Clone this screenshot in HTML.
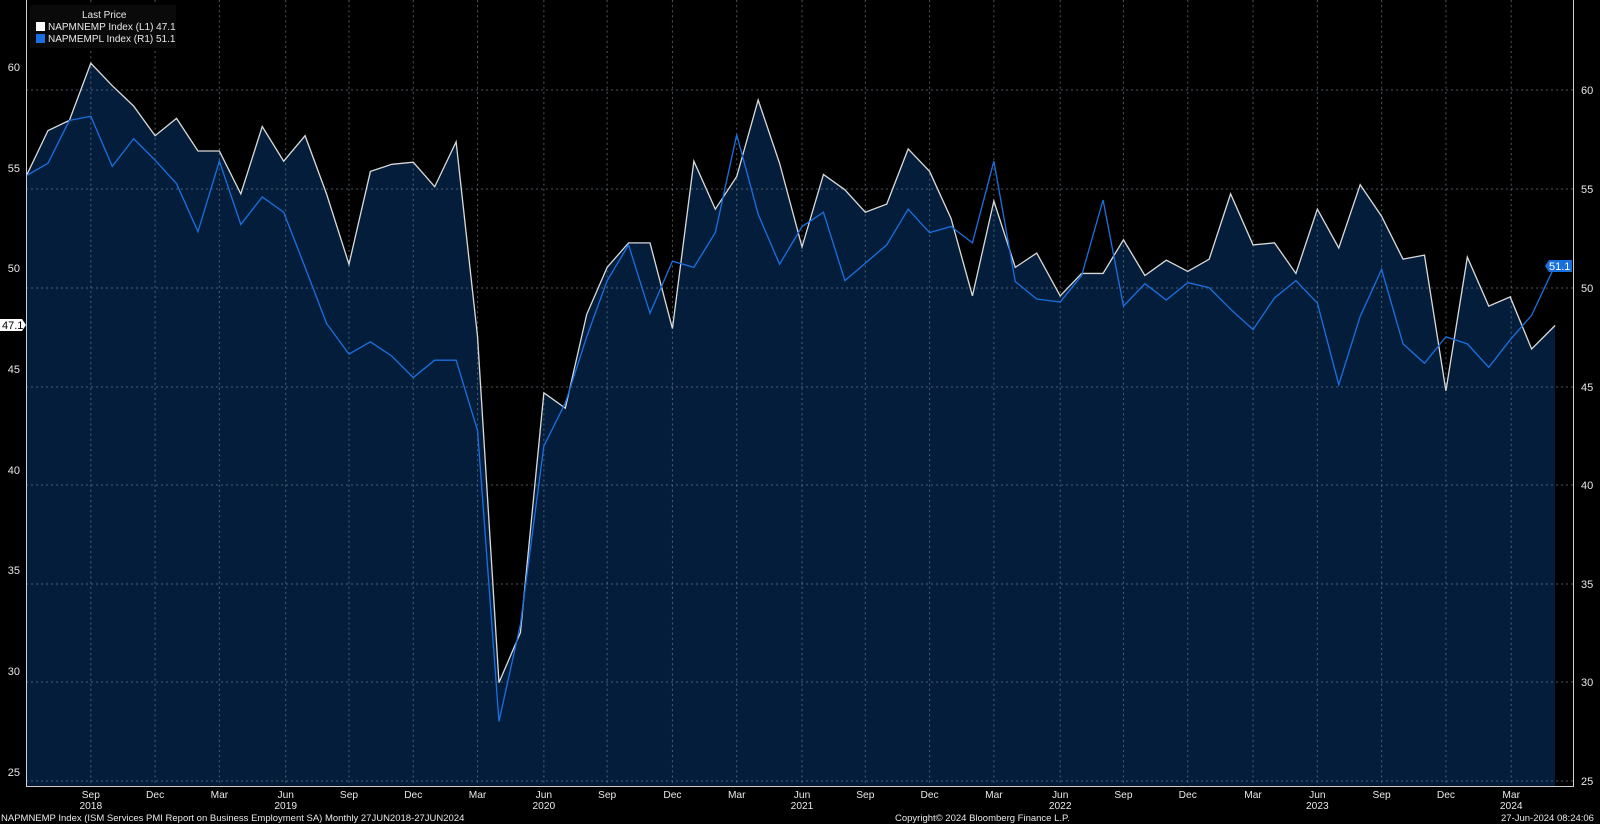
<!DOCTYPE html>
<html><head><meta charset="utf-8"><style>
html,body{margin:0;padding:0;background:#000;width:1600px;height:824px;overflow:hidden}
svg text{font-family:"Liberation Sans",sans-serif;fill:#e8e8e8}
</style></head><body>
<svg width="1600" height="824" viewBox="0 0 1600 824" xmlns="http://www.w3.org/2000/svg">
<rect width="1600" height="824" fill="#000"/>
<g transform="scale(1.0204,1.0204)">
<polygon fill="#031d3a" points="26,770 26,172 47,128 68,118 89,62 110,84 131,104 152,133 173,116 194,148 215,148 236,190 257,124 278,158 299,133 320,190 342,259 363,168 384,161 405,159 426,183 447,139 468,330 489,669 510,620 533,385 554,400 575,308 595,262 616,238 637,238 659,322 680,158 701,205 722,173 743,98 764,160 786,242 807,171 828,186 848,208 869,200 890,146 911,168 932,214 953,290 974,197 995,262 1016,248 1039,290 1060,268 1081,268 1101,235 1122,270 1143,255 1164,266 1185,254 1206,190 1228,240 1249,238 1270,268 1291,205 1312,243 1333,181 1354,212 1375,254 1396,250 1417,383 1438,252 1459,300 1480,291 1501,342 1524,319 1524,770"/>
<g stroke="#6a7a8a" stroke-width="1" stroke-dasharray="2,3" opacity="0.7">
<line x1="89" y1="0" x2="89" y2="770"/><line x1="152" y1="0" x2="152" y2="770"/><line x1="215" y1="0" x2="215" y2="770"/><line x1="280" y1="0" x2="280" y2="770"/><line x1="342" y1="0" x2="342" y2="770"/><line x1="405" y1="0" x2="405" y2="770"/><line x1="468" y1="0" x2="468" y2="770"/><line x1="533" y1="0" x2="533" y2="770"/><line x1="595" y1="0" x2="595" y2="770"/><line x1="659" y1="0" x2="659" y2="770"/><line x1="722" y1="0" x2="722" y2="770"/><line x1="786" y1="0" x2="786" y2="770"/><line x1="848" y1="0" x2="848" y2="770"/><line x1="911" y1="0" x2="911" y2="770"/><line x1="974" y1="0" x2="974" y2="770"/><line x1="1039" y1="0" x2="1039" y2="770"/><line x1="1101" y1="0" x2="1101" y2="770"/><line x1="1164" y1="0" x2="1164" y2="770"/><line x1="1228" y1="0" x2="1228" y2="770"/><line x1="1291" y1="0" x2="1291" y2="770"/><line x1="1354" y1="0" x2="1354" y2="770"/><line x1="1417" y1="0" x2="1417" y2="770"/><line x1="1481" y1="0" x2="1481" y2="770"/>
</g>
</g>
<g stroke="#6a7a8a" stroke-width="1" stroke-dasharray="2,3" opacity="0.7">
<line x1="26" y1="781" x2="1574" y2="781"/><line x1="26" y1="682" x2="1574" y2="682"/><line x1="26" y1="584" x2="1574" y2="584"/><line x1="26" y1="485" x2="1574" y2="485"/><line x1="26" y1="387" x2="1574" y2="387"/><line x1="26" y1="288" x2="1574" y2="288"/><line x1="26" y1="189" x2="1574" y2="189"/><line x1="26" y1="90" x2="1574" y2="90"/>
</g>
<g transform="scale(1.0204,1.0204)">
<polyline fill="none" stroke="#d8d8d8" stroke-width="1.3" points="26,172 47,128 68,118 89,62 110,84 131,104 152,133 173,116 194,148 215,148 236,190 257,124 278,158 299,133 320,190 342,259 363,168 384,161 405,159 426,183 447,139 468,330 489,669 510,620 533,385 554,400 575,308 595,262 616,238 637,238 659,322 680,158 701,205 722,173 743,98 764,160 786,242 807,171 828,186 848,208 869,200 890,146 911,168 932,214 953,290 974,197 995,262 1016,248 1039,290 1060,268 1081,268 1101,235 1122,270 1143,255 1164,266 1185,254 1206,190 1228,240 1249,238 1270,268 1291,205 1312,243 1333,181 1354,212 1375,254 1396,250 1417,383 1438,252 1459,300 1480,291 1501,342 1524,319"/>
<polyline fill="none" stroke="#1a6fe0" stroke-width="1.3" points="26,172 47,160 68,118 89,114 110,163 131,136 152,157 173,180 194,227 215,158 236,220 257,193 278,208 299,262 320,317 342,347 363,335 384,349 405,370 426,353 447,353 468,422 489,707 510,612 533,437 554,395 575,330 595,275 616,240 637,307 659,256 680,262 701,228 722,132 743,210 764,259 786,222 807,208 828,275 848,258 869,240 890,205 911,228 932,222 953,238 974,158 995,276 1016,293 1039,296 1060,270 1081,196 1101,300 1122,278 1143,294 1164,277 1185,282 1206,303 1228,323 1249,292 1270,275 1291,297 1312,377 1333,310 1354,264 1375,337 1396,356 1417,330 1438,337 1459,360 1480,333 1501,309 1524,260"/>
</g>
<g stroke="#cfcfcf" stroke-width="1">
<line x1="26.5" y1="0" x2="26.5" y2="787"/><line x1="1573.5" y1="0" x2="1573.5" y2="787"/><line x1="26" y1="786.5" x2="1574" y2="786.5"/>
</g>
<g font-size="11" text-anchor="end">
<text x="20" y="71">60</text><text x="20" y="172">55</text><text x="20" y="272">50</text><text x="20" y="373">45</text><text x="20" y="474">40</text><text x="20" y="574">35</text><text x="20" y="675">30</text><text x="20" y="776">25</text>
</g>
<g font-size="11">
<text x="1581" y="94">60</text><text x="1581" y="193">55</text><text x="1581" y="292">50</text><text x="1581" y="391">45</text><text x="1581" y="489">40</text><text x="1581" y="588">35</text><text x="1581" y="686">30</text><text x="1581" y="785">25</text>
</g>
<polygon points="0,319 22,319 26,325 22,331 0,331" fill="#fff"/>
<text x="2" y="329" font-size="11" style="fill:#000">47.1</text>
<polygon points="1545,266 1549,260 1572,260 1572,272 1549,272" fill="#1a6fe0"/>
<text x="1549" y="270" font-size="11" style="fill:#fff">51.1</text>
<rect x="30" y="5" width="146" height="43" fill="#0a0a0a"/>
<text x="82" y="18" font-size="10">Last Price</text>
<rect x="36" y="22" width="9" height="9" fill="#fff"/>
<rect x="36" y="34" width="9" height="9" fill="#1a6fe0"/>
<text x="48" y="30" font-size="10">NAPMNEMP Index  (L1) 47.1</text>
<text x="48" y="42" font-size="10">NAPMEMPL Index  (R1) 51.1</text>
<g font-size="10" text-anchor="middle" transform="matrix(1.0204 0 0 1 0 0)">
<text x="89" y="798">Sep</text><text x="152" y="798">Dec</text><text x="215" y="798">Mar</text><text x="280" y="798">Jun</text><text x="342" y="798">Sep</text><text x="405" y="798">Dec</text><text x="468" y="798">Mar</text><text x="533" y="798">Jun</text><text x="595" y="798">Sep</text><text x="659" y="798">Dec</text><text x="722" y="798">Mar</text><text x="786" y="798">Jun</text><text x="848" y="798">Sep</text><text x="911" y="798">Dec</text><text x="974" y="798">Mar</text><text x="1039" y="798">Jun</text><text x="1101" y="798">Sep</text><text x="1164" y="798">Dec</text><text x="1228" y="798">Mar</text><text x="1291" y="798">Jun</text><text x="1354" y="798">Sep</text><text x="1417" y="798">Dec</text><text x="1481" y="798">Mar</text>
<text x="89" y="809">2018</text><text x="280" y="809">2019</text><text x="533" y="809">2020</text><text x="786" y="809">2021</text><text x="1039" y="809">2022</text><text x="1291" y="809">2023</text><text x="1481" y="809">2024</text>
</g>
<text x="1" y="821" font-size="9.5">NAPMNEMP Index (ISM Services PMI Report on Business Employment SA)  Monthly 27JUN2018-27JUN2024</text>
<text x="895" y="821" font-size="9.5">Copyright© 2024 Bloomberg Finance L.P.</text>
<text x="1501" y="821" font-size="9.5">27-Jun-2024 08:24:06</text>
</svg>
</body></html>
